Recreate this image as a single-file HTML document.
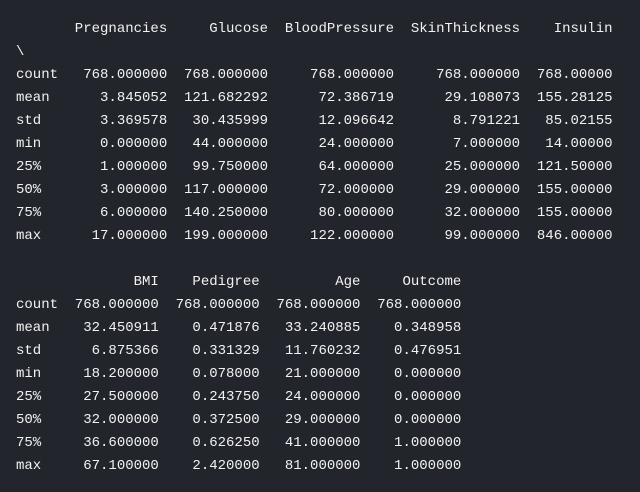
<!DOCTYPE html>
<html><head><style>
html,body{margin:0;padding:0;background:#22252b;width:640px;height:492px;overflow:hidden}
pre{position:absolute;left:16px;top:18px;margin:0;font-family:"Liberation Mono",monospace;font-size:14px;line-height:23px;color:#f2f2f2}
</style></head><body>
<pre>       Pregnancies     Glucose  BloodPressure  SkinThickness    Insulin
\
count   768.000000  768.000000     768.000000     768.000000  768.00000
mean      3.845052  121.682292      72.386719      29.108073  155.28125
std       3.369578   30.435999      12.096642       8.791221   85.02155
min       0.000000   44.000000      24.000000       7.000000   14.00000
25%       1.000000   99.750000      64.000000      25.000000  121.50000
50%       3.000000  117.000000      72.000000      29.000000  155.00000
75%       6.000000  140.250000      80.000000      32.000000  155.00000
max      17.000000  199.000000     122.000000      99.000000  846.00000

              BMI    Pedigree         Age     Outcome
count  768.000000  768.000000  768.000000  768.000000
mean    32.450911    0.471876   33.240885    0.348958
std      6.875366    0.331329   11.760232    0.476951
min     18.200000    0.078000   21.000000    0.000000
25%     27.500000    0.243750   24.000000    0.000000
50%     32.000000    0.372500   29.000000    0.000000
75%     36.600000    0.626250   41.000000    1.000000
max     67.100000    2.420000   81.000000    1.000000</pre>
</body></html>
